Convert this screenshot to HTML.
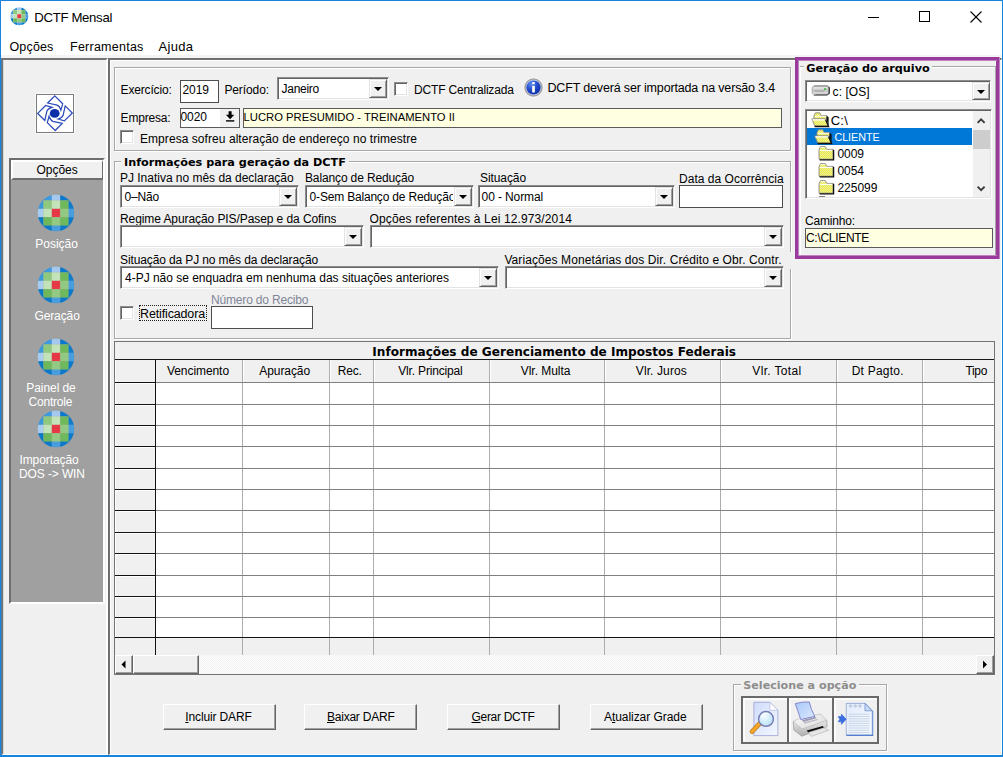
<!DOCTYPE html>
<html lang="pt-BR">
<head>
<meta charset="utf-8">
<title>DCTF Mensal</title>
<style>
*{box-sizing:border-box;margin:0;padding:0}
html,body{width:1003px;height:757px;overflow:hidden;background:#f0f0f0}
body{position:relative;font-family:"Liberation Sans",sans-serif;font-size:12px;color:#000}
.a{position:absolute}
.t{position:absolute;white-space:nowrap;line-height:1;font-family:"Liberation Sans",sans-serif}
.b{font-weight:bold;font-family:"DejaVu Sans","Liberation Sans",sans-serif}
/* window chrome */
#titlebar{left:0;top:0;width:1003px;height:58px;background:#fff;border-bottom:3px solid #f4f4f4}
#bt{left:0;top:0;width:1003px;height:1px;background:#1883dc}
#bl{left:0;top:0;width:1px;height:757px;background:#1883dc}
#bl2{left:1px;top:58px;width:1px;height:697px;background:#5f7c96}
#br{left:1002px;top:0;width:1px;height:757px;background:#1883dc}
#bb{left:0;top:755px;width:1003px;height:2px;background:#1883dc}
/* panels */
#lp{left:1px;top:58px;width:107px;height:697px;box-shadow:inset 1px 0 0 #d9d9d9;border-top:2px solid #757575;border-left:2px solid #757575;border-right:2px solid #fff;border-bottom:1px solid #fff;background:#f0f0f0}
#rp{left:108px;top:58px;width:894px;height:697px;box-shadow:inset 1px 1px 0 #fff;border-top:2px solid #6f6f6f;border-left:2px solid #6f6f6f;border-right:1px solid #fff;border-bottom:1px solid #fff;background:#f0f0f0}
/* etched group */
.grp{position:absolute;border:1px solid #a8a8a8;box-shadow:1px 1px 0 #fff, inset 1px 1px 0 #fff}
.lbg{position:absolute;background:#f0f0f0}
/* sunken combo */
.cb{position:absolute;background:#fff;border:1px solid;border-color:#8c8c8c #fff #fff #8c8c8c;box-shadow:inset 1px 1px 0 #646464, inset -1px -1px 0 #e3e3e3}
.dd{position:absolute;width:18px;height:19px;background:#f0f0f0;border:1px solid;border-color:#e3e3e3 #646464 #646464 #e3e3e3;box-shadow:inset 1px 1px 0 #fff, inset -1px -1px 0 #a0a0a0}
.dd:after{content:"";position:absolute;left:4px;top:7px;border:4px solid transparent;border-top:4px solid #000;border-bottom:0;width:0;height:0}
.dd.up:after{}
.inp{position:absolute;background:#fff;border:1px solid #4d4d4d}
.yel{position:absolute;background:#ffffe1;border:1px solid #5a5a5a}
.chk{position:absolute;width:14px;height:14px;background:#fff;border:1px solid;border-color:#8c8c8c #fff #fff #8c8c8c;box-shadow:inset 1px 1px 0 #646464, inset -1px -1px 0 #e3e3e3}
.btn{position:absolute;background:#f0f0f0;border:1px solid;border-color:#fff #646464 #646464 #fff;box-shadow:inset -1px -1px 0 #a0a0a0, inset 1px 1px 0 #f0f0f0}
u{text-decoration:underline}
</style>
</head>
<body>
<div class="a" id="titlebar"></div>
<div class="a" id="lp"></div><div class="a" id="rp"></div>
<div class="a" id="bt"></div><div class="a" id="bl"></div><div class="a" id="bl2"></div><div class="a" id="br"></div><div class="a" id="bb"></div>
<svg class="a" style="left:8.7px;top:6.3px" width="20.6" height="20.6" viewBox="-21 -21 42 42"><defs><clipPath id="c8_7_6_3"><circle cx="0" cy="0" r="18.3"/></clipPath></defs><g clip-path="url(#c8_7_6_3)"><rect x="-21.0" y="-21.0" width="8.5" height="8.5" fill="#2d8cd9"/><rect x="-12.6" y="-21.0" width="8.5" height="8.5" fill="#3f9ae0"/><rect x="-4.2" y="-21.0" width="8.5" height="8.5" fill="#a5c9ee"/><rect x="4.2" y="-21.0" width="8.5" height="8.5" fill="#0c7acb"/><rect x="12.6" y="-21.0" width="8.5" height="8.5" fill="#0b79c9"/><rect x="-21.0" y="-12.6" width="8.5" height="8.5" fill="#3b97dc"/><rect x="-12.6" y="-12.6" width="8.5" height="8.5" fill="#8fc87f"/><rect x="-4.2" y="-12.6" width="8.5" height="8.5" fill="#c5e3bb"/><rect x="4.2" y="-12.6" width="8.5" height="8.5" fill="#70b85c"/><rect x="12.6" y="-12.6" width="8.5" height="8.5" fill="#0f7ccc"/><rect x="-21.0" y="-4.2" width="8.5" height="8.5" fill="#a8cbf0"/><rect x="-12.6" y="-4.2" width="8.5" height="8.5" fill="#c2e2b8"/><rect x="-4.2" y="-4.2" width="8.5" height="8.5" fill="#e63946"/><rect x="4.2" y="-4.2" width="8.5" height="8.5" fill="#94c984"/><rect x="12.6" y="-4.2" width="8.5" height="8.5" fill="#4a9ddc"/><rect x="-21.0" y="4.2" width="8.5" height="8.5" fill="#0b79c9"/><rect x="-12.6" y="4.2" width="8.5" height="8.5" fill="#6fb75b"/><rect x="-4.2" y="4.2" width="8.5" height="8.5" fill="#94c984"/><rect x="4.2" y="4.2" width="8.5" height="8.5" fill="#70b85c"/><rect x="12.6" y="4.2" width="8.5" height="8.5" fill="#0b79c9"/><rect x="-21.0" y="12.6" width="8.5" height="8.5" fill="#0b79c9"/><rect x="-12.6" y="12.6" width="8.5" height="8.5" fill="#0b79c9"/><rect x="-4.2" y="12.6" width="8.5" height="8.5" fill="#4a9ddc"/><rect x="4.2" y="12.6" width="8.5" height="8.5" fill="#0b79c9"/><rect x="12.6" y="12.6" width="8.5" height="8.5" fill="#0b79c9"/></g></svg>
<svg class="a" style="left:860px;top:5px" width="130" height="24" viewBox="860 5 130 24" shape-rendering="crispEdges"><rect x="868" y="17" width="11" height="1" fill="#000"/><rect x="919.5" y="11.5" width="10" height="10" fill="none" stroke="#000" stroke-width="1"/><g shape-rendering="geometricPrecision" stroke="#000" stroke-width="1.1"><line x1="970.5" y1="11.5" x2="981.5" y2="22.5"/><line x1="981.5" y1="11.5" x2="970.5" y2="22.5"/></g></svg>
<div class="a" style="left:36px;top:94px;width:38px;height:39px;background:#fff;border:1px solid #7c7c7c;box-shadow:0 0 0 1px #fafafa"></div>
<svg class="a" style="left:30px;top:88px" width="50" height="50" viewBox="-25 -25.2 50 50"><g fill="none" stroke="#2b4bb8" stroke-width="1.25" stroke-linejoin="miter"><path transform="rotate(0)" d="M-0.2,-17.3 L7.7,-9.4 L5.9,-3.1 C5,-6 3.5,-7.6 2.1,-8.1 L-7.3,-10.2 Z"/><path transform="rotate(90)" d="M-0.2,-17.3 L7.7,-9.4 L5.9,-3.1 C5,-6 3.5,-7.6 2.1,-8.1 L-7.3,-10.2 Z"/><path transform="rotate(180)" d="M-0.2,-17.3 L7.7,-9.4 L5.9,-3.1 C5,-6 3.5,-7.6 2.1,-8.1 L-7.3,-10.2 Z"/><path transform="rotate(270)" d="M-0.2,-17.3 L7.7,-9.4 L5.9,-3.1 C5,-6 3.5,-7.6 2.1,-8.1 L-7.3,-10.2 Z"/></g><ellipse cx="-0.3" cy="0.2" rx="4.9" ry="4.3" fill="#0a2fa8"/></svg>
<div class="a" style="left:9px;top:158px;width:96px;height:446px;background:#a0a0a0;border:2px solid;border-color:#6e6e6e #fff #fff #6e6e6e"></div>
<div class="a" style="left:11px;top:160px;width:92px;height:20px;background:#f0f0f0;border-top:2px solid #fff;border-left:2px solid #fff;border-bottom:2px solid #6e6e6e;border-right:1px solid #6e6e6e"></div>
<svg class="a" style="left:35.1px;top:192.1px" width="42" height="42" viewBox="-21 -21 42 42"><defs><clipPath id="c35_1_192_1"><circle cx="0" cy="0" r="18.3"/></clipPath></defs><g clip-path="url(#c35_1_192_1)"><rect x="-21.0" y="-21.0" width="8.5" height="8.5" fill="#2d8cd9"/><rect x="-12.6" y="-21.0" width="8.5" height="8.5" fill="#3f9ae0"/><rect x="-4.2" y="-21.0" width="8.5" height="8.5" fill="#a5c9ee"/><rect x="4.2" y="-21.0" width="8.5" height="8.5" fill="#0c7acb"/><rect x="12.6" y="-21.0" width="8.5" height="8.5" fill="#0b79c9"/><rect x="-21.0" y="-12.6" width="8.5" height="8.5" fill="#3b97dc"/><rect x="-12.6" y="-12.6" width="8.5" height="8.5" fill="#8fc87f"/><rect x="-4.2" y="-12.6" width="8.5" height="8.5" fill="#c5e3bb"/><rect x="4.2" y="-12.6" width="8.5" height="8.5" fill="#70b85c"/><rect x="12.6" y="-12.6" width="8.5" height="8.5" fill="#0f7ccc"/><rect x="-21.0" y="-4.2" width="8.5" height="8.5" fill="#a8cbf0"/><rect x="-12.6" y="-4.2" width="8.5" height="8.5" fill="#c2e2b8"/><rect x="-4.2" y="-4.2" width="8.5" height="8.5" fill="#e63946"/><rect x="4.2" y="-4.2" width="8.5" height="8.5" fill="#94c984"/><rect x="12.6" y="-4.2" width="8.5" height="8.5" fill="#4a9ddc"/><rect x="-21.0" y="4.2" width="8.5" height="8.5" fill="#0b79c9"/><rect x="-12.6" y="4.2" width="8.5" height="8.5" fill="#6fb75b"/><rect x="-4.2" y="4.2" width="8.5" height="8.5" fill="#94c984"/><rect x="4.2" y="4.2" width="8.5" height="8.5" fill="#70b85c"/><rect x="12.6" y="4.2" width="8.5" height="8.5" fill="#0b79c9"/><rect x="-21.0" y="12.6" width="8.5" height="8.5" fill="#0b79c9"/><rect x="-12.6" y="12.6" width="8.5" height="8.5" fill="#0b79c9"/><rect x="-4.2" y="12.6" width="8.5" height="8.5" fill="#4a9ddc"/><rect x="4.2" y="12.6" width="8.5" height="8.5" fill="#0b79c9"/><rect x="12.6" y="12.6" width="8.5" height="8.5" fill="#0b79c9"/></g></svg>
<svg class="a" style="left:35.1px;top:264.1px" width="42" height="42" viewBox="-21 -21 42 42"><defs><clipPath id="c35_1_264_1"><circle cx="0" cy="0" r="18.3"/></clipPath></defs><g clip-path="url(#c35_1_264_1)"><rect x="-21.0" y="-21.0" width="8.5" height="8.5" fill="#2d8cd9"/><rect x="-12.6" y="-21.0" width="8.5" height="8.5" fill="#3f9ae0"/><rect x="-4.2" y="-21.0" width="8.5" height="8.5" fill="#a5c9ee"/><rect x="4.2" y="-21.0" width="8.5" height="8.5" fill="#0c7acb"/><rect x="12.6" y="-21.0" width="8.5" height="8.5" fill="#0b79c9"/><rect x="-21.0" y="-12.6" width="8.5" height="8.5" fill="#3b97dc"/><rect x="-12.6" y="-12.6" width="8.5" height="8.5" fill="#8fc87f"/><rect x="-4.2" y="-12.6" width="8.5" height="8.5" fill="#c5e3bb"/><rect x="4.2" y="-12.6" width="8.5" height="8.5" fill="#70b85c"/><rect x="12.6" y="-12.6" width="8.5" height="8.5" fill="#0f7ccc"/><rect x="-21.0" y="-4.2" width="8.5" height="8.5" fill="#a8cbf0"/><rect x="-12.6" y="-4.2" width="8.5" height="8.5" fill="#c2e2b8"/><rect x="-4.2" y="-4.2" width="8.5" height="8.5" fill="#e63946"/><rect x="4.2" y="-4.2" width="8.5" height="8.5" fill="#94c984"/><rect x="12.6" y="-4.2" width="8.5" height="8.5" fill="#4a9ddc"/><rect x="-21.0" y="4.2" width="8.5" height="8.5" fill="#0b79c9"/><rect x="-12.6" y="4.2" width="8.5" height="8.5" fill="#6fb75b"/><rect x="-4.2" y="4.2" width="8.5" height="8.5" fill="#94c984"/><rect x="4.2" y="4.2" width="8.5" height="8.5" fill="#70b85c"/><rect x="12.6" y="4.2" width="8.5" height="8.5" fill="#0b79c9"/><rect x="-21.0" y="12.6" width="8.5" height="8.5" fill="#0b79c9"/><rect x="-12.6" y="12.6" width="8.5" height="8.5" fill="#0b79c9"/><rect x="-4.2" y="12.6" width="8.5" height="8.5" fill="#4a9ddc"/><rect x="4.2" y="12.6" width="8.5" height="8.5" fill="#0b79c9"/><rect x="12.6" y="12.6" width="8.5" height="8.5" fill="#0b79c9"/></g></svg>
<svg class="a" style="left:35.1px;top:336.1px" width="42" height="42" viewBox="-21 -21 42 42"><defs><clipPath id="c35_1_336_1"><circle cx="0" cy="0" r="18.3"/></clipPath></defs><g clip-path="url(#c35_1_336_1)"><rect x="-21.0" y="-21.0" width="8.5" height="8.5" fill="#2d8cd9"/><rect x="-12.6" y="-21.0" width="8.5" height="8.5" fill="#3f9ae0"/><rect x="-4.2" y="-21.0" width="8.5" height="8.5" fill="#a5c9ee"/><rect x="4.2" y="-21.0" width="8.5" height="8.5" fill="#0c7acb"/><rect x="12.6" y="-21.0" width="8.5" height="8.5" fill="#0b79c9"/><rect x="-21.0" y="-12.6" width="8.5" height="8.5" fill="#3b97dc"/><rect x="-12.6" y="-12.6" width="8.5" height="8.5" fill="#8fc87f"/><rect x="-4.2" y="-12.6" width="8.5" height="8.5" fill="#c5e3bb"/><rect x="4.2" y="-12.6" width="8.5" height="8.5" fill="#70b85c"/><rect x="12.6" y="-12.6" width="8.5" height="8.5" fill="#0f7ccc"/><rect x="-21.0" y="-4.2" width="8.5" height="8.5" fill="#a8cbf0"/><rect x="-12.6" y="-4.2" width="8.5" height="8.5" fill="#c2e2b8"/><rect x="-4.2" y="-4.2" width="8.5" height="8.5" fill="#e63946"/><rect x="4.2" y="-4.2" width="8.5" height="8.5" fill="#94c984"/><rect x="12.6" y="-4.2" width="8.5" height="8.5" fill="#4a9ddc"/><rect x="-21.0" y="4.2" width="8.5" height="8.5" fill="#0b79c9"/><rect x="-12.6" y="4.2" width="8.5" height="8.5" fill="#6fb75b"/><rect x="-4.2" y="4.2" width="8.5" height="8.5" fill="#94c984"/><rect x="4.2" y="4.2" width="8.5" height="8.5" fill="#70b85c"/><rect x="12.6" y="4.2" width="8.5" height="8.5" fill="#0b79c9"/><rect x="-21.0" y="12.6" width="8.5" height="8.5" fill="#0b79c9"/><rect x="-12.6" y="12.6" width="8.5" height="8.5" fill="#0b79c9"/><rect x="-4.2" y="12.6" width="8.5" height="8.5" fill="#4a9ddc"/><rect x="4.2" y="12.6" width="8.5" height="8.5" fill="#0b79c9"/><rect x="12.6" y="12.6" width="8.5" height="8.5" fill="#0b79c9"/></g></svg>
<svg class="a" style="left:35.1px;top:408.1px" width="42" height="42" viewBox="-21 -21 42 42"><defs><clipPath id="c35_1_408_1"><circle cx="0" cy="0" r="18.3"/></clipPath></defs><g clip-path="url(#c35_1_408_1)"><rect x="-21.0" y="-21.0" width="8.5" height="8.5" fill="#2d8cd9"/><rect x="-12.6" y="-21.0" width="8.5" height="8.5" fill="#3f9ae0"/><rect x="-4.2" y="-21.0" width="8.5" height="8.5" fill="#a5c9ee"/><rect x="4.2" y="-21.0" width="8.5" height="8.5" fill="#0c7acb"/><rect x="12.6" y="-21.0" width="8.5" height="8.5" fill="#0b79c9"/><rect x="-21.0" y="-12.6" width="8.5" height="8.5" fill="#3b97dc"/><rect x="-12.6" y="-12.6" width="8.5" height="8.5" fill="#8fc87f"/><rect x="-4.2" y="-12.6" width="8.5" height="8.5" fill="#c5e3bb"/><rect x="4.2" y="-12.6" width="8.5" height="8.5" fill="#70b85c"/><rect x="12.6" y="-12.6" width="8.5" height="8.5" fill="#0f7ccc"/><rect x="-21.0" y="-4.2" width="8.5" height="8.5" fill="#a8cbf0"/><rect x="-12.6" y="-4.2" width="8.5" height="8.5" fill="#c2e2b8"/><rect x="-4.2" y="-4.2" width="8.5" height="8.5" fill="#e63946"/><rect x="4.2" y="-4.2" width="8.5" height="8.5" fill="#94c984"/><rect x="12.6" y="-4.2" width="8.5" height="8.5" fill="#4a9ddc"/><rect x="-21.0" y="4.2" width="8.5" height="8.5" fill="#0b79c9"/><rect x="-12.6" y="4.2" width="8.5" height="8.5" fill="#6fb75b"/><rect x="-4.2" y="4.2" width="8.5" height="8.5" fill="#94c984"/><rect x="4.2" y="4.2" width="8.5" height="8.5" fill="#70b85c"/><rect x="12.6" y="4.2" width="8.5" height="8.5" fill="#0b79c9"/><rect x="-21.0" y="12.6" width="8.5" height="8.5" fill="#0b79c9"/><rect x="-12.6" y="12.6" width="8.5" height="8.5" fill="#0b79c9"/><rect x="-4.2" y="12.6" width="8.5" height="8.5" fill="#4a9ddc"/><rect x="4.2" y="12.6" width="8.5" height="8.5" fill="#0b79c9"/><rect x="12.6" y="12.6" width="8.5" height="8.5" fill="#0b79c9"/></g></svg>
<div class="grp" style="left:114px;top:67px;width:677px;height:84px"></div>
<div class="inp" style="left:180px;top:80px;width:39px;height:23px"></div>
<div class="cb" style="left:277px;top:77px;width:112px;height:23px"></div><div class="dd" style="left:369px;top:79px"></div>
<div class="chk" style="left:394px;top:82px"></div>
<svg class="a" style="left:522px;top:75.9px" width="23" height="23" viewBox="-11.5 -11.5 23 23"><defs><radialGradient id="ig" cx="35%" cy="25%" r="80%"><stop offset="0" stop-color="#5b8af0"/><stop offset="0.55" stop-color="#2148c8"/><stop offset="1" stop-color="#0d2fa6"/></radialGradient></defs><circle r="10.3" fill="#f7f7f7"/><circle r="9.3" fill="#a3a3a3"/><circle r="7.7" fill="#c3d0f2"/><circle r="7.1" fill="url(#ig)"/><rect x="-1.25" y="-5.5" width="2.5" height="2.3" rx="0.6" fill="#fff"/><rect x="-1.35" y="-1.8" width="2.7" height="6.8" rx="0.4" fill="#fffdf0"/></svg>
<div class="a" style="left:180px;top:108px;width:60px;height:20px;background:#fff;border:1px solid #5a5a5a"></div>
<div class="a" style="left:220px;top:109px;width:19px;height:18px;background:#f0f0f0"></div>
<svg class="a" style="left:225px;top:110px" width="11" height="13" viewBox="225 110 11 13"><path d="M228.6,111.2 h3 v3.6 h2.7 l-4.2,4.5 l-4.2,-4.5 h2.7 z" fill="#000"/><rect x="226" y="120.2" width="8.3" height="1.4" fill="#000"/></svg>
<div class="yel" style="left:243px;top:108px;width:539px;height:20px"></div>
<div class="chk" style="left:120px;top:130px"></div>
<div class="grp" style="left:114px;top:161px;width:677px;height:178px"></div>
<div class="lbg" style="left:121px;top:155px;width:228px;height:14px"></div>
<div class="cb" style="left:120px;top:185px;width:179px;height:23px"></div><div class="dd" style="left:279px;top:187px"></div>
<div class="cb" style="left:305px;top:185px;width:169px;height:23px"></div><div class="dd" style="left:454px;top:187px"></div>
<div class="cb" style="left:478px;top:185px;width:197px;height:23px"></div><div class="dd" style="left:655px;top:187px"></div>
<div class="inp" style="left:679px;top:185px;width:104px;height:23px"></div>
<div class="cb" style="left:120px;top:225px;width:244px;height:23px"></div><div class="dd" style="left:344px;top:227px"></div>
<div class="cb" style="left:370px;top:225px;width:414px;height:23px"></div><div class="dd" style="left:764px;top:227px"></div>
<div class="cb" style="left:120px;top:266px;width:379px;height:23px"></div><div class="dd" style="left:479px;top:268px"></div>
<div class="cb" style="left:505px;top:266px;width:279px;height:23px"></div><div class="dd" style="left:764px;top:268px"></div>
<div class="lbg" style="left:786px;top:252px;width:7px;height:17px"></div>
<div class="chk" style="left:120px;top:306px"></div>
<div class="a" style="left:139px;top:305px;width:68px;height:16px;border:1px dotted #222"></div>
<div class="inp" style="left:211px;top:306px;width:102px;height:23px"></div>
<div class="a" style="left:309px;top:189px;width:144px;height:15px;overflow:hidden"><span class="t" style="left:0.6px;top:1.8px;font-size:12px;letter-spacing:-0.19px">0-Sem Balanço de Redução</span></div>
<div class="a" style="left:800px;top:66px;width:196px;height:190px;border-top:1px solid #a8a8a8;border-right:1px solid #a8a8a8;box-shadow:inset 0 1px 0 #fff, inset 1px 0 0 #fff"></div>
<div class="lbg" style="left:804px;top:60px;width:128px;height:14px"></div>
<div class="a" style="left:795px;top:57px;width:205px;height:202px;border:4px solid #9a3a9c"></div><div class="a" style="left:798px;top:60px;width:199px;height:196px;border:1px solid #bc83be;border-right:0"></div><div class="a" style="left:999px;top:57px;width:1px;height:202px;background:#bc83be"></div>
<div class="cb" style="left:805px;top:80px;width:186px;height:22px"></div><div class="dd" style="left:972px;top:82px;height:18px"></div>
<svg class="a" style="left:811px;top:84px" width="20" height="13" viewBox="0 0 20 13"><defs><linearGradient id="dg" x1="0" y1="0" x2="0" y2="1"><stop offset="0" stop-color="#f4f4f4"/><stop offset="0.5" stop-color="#c4c4c4"/><stop offset="1" stop-color="#e8e8e8"/></linearGradient></defs><path d="M2.2,11.6 h14 l2.6,-2.2 v-6 l-1,-1 z" fill="#1a1a1a"/><path d="M3.4,1.2 h13 l2,1.6 h-16.8 z" fill="#8d8d8d"/><rect x="1.2" y="2.6" width="16.2" height="7.6" rx="1.4" fill="url(#dg)" stroke="#9a9a9a" stroke-width="0.8"/><rect x="3.5" y="6.6" width="10" height="1" fill="#9c9c9c"/><rect x="13" y="4.3" width="2.2" height="1.5" fill="#33b233"/></svg>
<div class="cb" style="left:805px;top:109px;width:187px;height:90px"></div>
<div class="a" style="left:807px;top:128px;width:165px;height:17px;background:#0078d7"></div>
<div class="a" style="left:973px;top:111px;width:17px;height:86px;background:#f0f0f0"></div>
<div class="a" style="left:973px;top:130px;width:17px;height:19px;background:#cdcdcd"></div>
<svg class="a" style="left:973px;top:111px" width="17" height="86" viewBox="0 0 17 86"><g fill="none" stroke="#3c3c3c" stroke-width="1.9"><path d="M4.6,11.9 L8.1,8.4 L11.6,11.9"/><path d="M4.6,75.6 L8.1,79.1 L11.6,75.6"/></g></svg>
<svg class="a" style="left:0;top:0" width="0" height="0"><defs><pattern id="dth" width="2" height="2" patternUnits="userSpaceOnUse"><rect width="2" height="2" fill="#f3f33a"/><rect width="1" height="1" fill="#e6e6a4"/><rect x="1" y="1" width="1" height="1" fill="#e6e6a4"/></pattern></defs></svg>
<svg class="a" style="left:810.5px;top:111.8px" width="19" height="16" viewBox="0 0 19 16"><path d="M3,3.6 l1.4,-2.8 h4.4 l1.4,2.8 h5.4 v3.6 h-12.6 z" fill="url(#dth)" stroke="#8a8a8a" stroke-width="0.9"/><path d="M4,4.3 h11" stroke="#fff" stroke-width="0.9"/><path d="M15.8,3.8 l1.8,1.4 v9 l-2.2,-7 z" fill="#111"/><path d="M0.8,6.9 h13.2 l3.2,7.2 h-13.4 z" fill="url(#dth)" stroke="#8a8a8a" stroke-width="0.9"/><path d="M1.4,7.9 h12.4" stroke="#fff" stroke-width="1.3"/><path d="M3.6,14.5 h14 l-2.8,-6.4" fill="none" stroke="#111" stroke-width="1.3"/></svg>
<svg class="a" style="left:814px;top:128.8px" width="19" height="16" viewBox="0 0 19 16"><path d="M3,3.6 l1.4,-2.8 h4.4 l1.4,2.8 h5.4 v3.6 h-12.6 z" fill="url(#dth)" stroke="#8a8a8a" stroke-width="0.9"/><path d="M4,4.3 h11" stroke="#fff" stroke-width="0.9"/><path d="M15.8,3.8 l1.8,1.4 v9 l-2.2,-7 z" fill="#111"/><path d="M0.8,6.9 h13.2 l3.2,7.2 h-13.4 z" fill="url(#dth)" stroke="#8a8a8a" stroke-width="0.9"/><path d="M1.4,7.9 h12.4" stroke="#fff" stroke-width="1.3"/><path d="M3.6,14.5 h14 l-2.8,-6.4" fill="none" stroke="#111" stroke-width="1.3"/></svg>
<svg class="a" style="left:817.9px;top:145.8px" width="17" height="15" viewBox="0 0 17 15"><path d="M1,3.4 l1.6,-2.9 h4.6 l1.6,2.9 h6.2 v9.8 h-14 z" fill="url(#dth)" stroke="#8a8a8a" stroke-width="0.9"/><path d="M1.8,4.4 h12.4" stroke="#fff" stroke-width="1.1"/><path d="M2.6,1.4 h4.4" stroke="#fff" stroke-width="0.8"/><path d="M15.6,3.8 v10 h-14" fill="none" stroke="#111" stroke-width="1.3"/></svg>
<svg class="a" style="left:817.9px;top:162.8px" width="17" height="15" viewBox="0 0 17 15"><path d="M1,3.4 l1.6,-2.9 h4.6 l1.6,2.9 h6.2 v9.8 h-14 z" fill="url(#dth)" stroke="#8a8a8a" stroke-width="0.9"/><path d="M1.8,4.4 h12.4" stroke="#fff" stroke-width="1.1"/><path d="M2.6,1.4 h4.4" stroke="#fff" stroke-width="0.8"/><path d="M15.6,3.8 v10 h-14" fill="none" stroke="#111" stroke-width="1.3"/></svg>
<svg class="a" style="left:817.9px;top:179.8px" width="17" height="15" viewBox="0 0 17 15"><path d="M1,3.4 l1.6,-2.9 h4.6 l1.6,2.9 h6.2 v9.8 h-14 z" fill="url(#dth)" stroke="#8a8a8a" stroke-width="0.9"/><path d="M1.8,4.4 h12.4" stroke="#fff" stroke-width="1.1"/><path d="M2.6,1.4 h4.4" stroke="#fff" stroke-width="0.8"/><path d="M15.6,3.8 v10 h-14" fill="none" stroke="#111" stroke-width="1.3"/></svg>
<div class="a" style="left:819px;top:196px;width:6px;height:1px;background:#8a8a8a"></div>
<div class="yel" style="left:805px;top:228px;width:188px;height:20px"></div>
<div class="a" style="left:114px;top:341px;width:881px;height:334px;background:#f0f0f0;border:1px solid #747474"></div>
<div class="a" style="left:156px;top:383px;width:838px;height:254px;background:#fff"></div>
<div class="a" style="left:115px;top:359px;width:879px;height:1px;background:#1a1a1a"></div>
<div class="a" style="left:242px;top:360px;width:1px;height:295px;background:#adadad"></div>
<div class="a" style="left:243px;top:360px;width:1px;height:22px;background:#fff"></div>
<div class="a" style="left:329px;top:360px;width:1px;height:295px;background:#adadad"></div>
<div class="a" style="left:330px;top:360px;width:1px;height:22px;background:#fff"></div>
<div class="a" style="left:373px;top:360px;width:1px;height:295px;background:#adadad"></div>
<div class="a" style="left:374px;top:360px;width:1px;height:22px;background:#fff"></div>
<div class="a" style="left:489px;top:360px;width:1px;height:295px;background:#adadad"></div>
<div class="a" style="left:490px;top:360px;width:1px;height:22px;background:#fff"></div>
<div class="a" style="left:604px;top:360px;width:1px;height:295px;background:#adadad"></div>
<div class="a" style="left:605px;top:360px;width:1px;height:22px;background:#fff"></div>
<div class="a" style="left:720px;top:360px;width:1px;height:295px;background:#adadad"></div>
<div class="a" style="left:721px;top:360px;width:1px;height:22px;background:#fff"></div>
<div class="a" style="left:836px;top:360px;width:1px;height:295px;background:#adadad"></div>
<div class="a" style="left:837px;top:360px;width:1px;height:22px;background:#fff"></div>
<div class="a" style="left:922px;top:360px;width:1px;height:295px;background:#adadad"></div>
<div class="a" style="left:923px;top:360px;width:1px;height:22px;background:#fff"></div>
<div class="a" style="left:115px;top:360px;width:1px;height:278px;background:#fff"></div>
<div class="a" style="left:156px;top:382px;width:838px;height:1px;background:#808080"></div>
<div class="a" style="left:115px;top:382px;width:41px;height:1px;background:#111"></div>
<div class="a" style="left:115px;top:383px;width:40px;height:1px;background:#fff"></div>
<div class="a" style="left:156px;top:404px;width:838px;height:1px;background:#808080"></div>
<div class="a" style="left:115px;top:404px;width:41px;height:1px;background:#111"></div>
<div class="a" style="left:115px;top:405px;width:40px;height:1px;background:#fff"></div>
<div class="a" style="left:156px;top:425px;width:838px;height:1px;background:#808080"></div>
<div class="a" style="left:115px;top:425px;width:41px;height:1px;background:#111"></div>
<div class="a" style="left:115px;top:426px;width:40px;height:1px;background:#fff"></div>
<div class="a" style="left:156px;top:446px;width:838px;height:1px;background:#808080"></div>
<div class="a" style="left:115px;top:446px;width:41px;height:1px;background:#111"></div>
<div class="a" style="left:115px;top:447px;width:40px;height:1px;background:#fff"></div>
<div class="a" style="left:156px;top:468px;width:838px;height:1px;background:#808080"></div>
<div class="a" style="left:115px;top:468px;width:41px;height:1px;background:#111"></div>
<div class="a" style="left:115px;top:469px;width:40px;height:1px;background:#fff"></div>
<div class="a" style="left:156px;top:489px;width:838px;height:1px;background:#808080"></div>
<div class="a" style="left:115px;top:489px;width:41px;height:1px;background:#111"></div>
<div class="a" style="left:115px;top:490px;width:40px;height:1px;background:#fff"></div>
<div class="a" style="left:156px;top:510px;width:838px;height:1px;background:#808080"></div>
<div class="a" style="left:115px;top:510px;width:41px;height:1px;background:#111"></div>
<div class="a" style="left:115px;top:511px;width:40px;height:1px;background:#fff"></div>
<div class="a" style="left:156px;top:532px;width:838px;height:1px;background:#808080"></div>
<div class="a" style="left:115px;top:532px;width:41px;height:1px;background:#111"></div>
<div class="a" style="left:115px;top:533px;width:40px;height:1px;background:#fff"></div>
<div class="a" style="left:156px;top:553px;width:838px;height:1px;background:#808080"></div>
<div class="a" style="left:115px;top:553px;width:41px;height:1px;background:#111"></div>
<div class="a" style="left:115px;top:554px;width:40px;height:1px;background:#fff"></div>
<div class="a" style="left:156px;top:575px;width:838px;height:1px;background:#808080"></div>
<div class="a" style="left:115px;top:575px;width:41px;height:1px;background:#111"></div>
<div class="a" style="left:115px;top:576px;width:40px;height:1px;background:#fff"></div>
<div class="a" style="left:156px;top:596px;width:838px;height:1px;background:#808080"></div>
<div class="a" style="left:115px;top:596px;width:41px;height:1px;background:#111"></div>
<div class="a" style="left:115px;top:597px;width:40px;height:1px;background:#fff"></div>
<div class="a" style="left:156px;top:617px;width:838px;height:1px;background:#808080"></div>
<div class="a" style="left:115px;top:617px;width:41px;height:1px;background:#111"></div>
<div class="a" style="left:115px;top:618px;width:40px;height:1px;background:#fff"></div>
<div class="a" style="left:115px;top:637px;width:879px;height:1px;background:#111"></div>
<div class="a" style="left:155px;top:360px;width:1px;height:295px;background:#111"></div>
<div class="a" style="left:115px;top:655px;width:879px;height:19px;background:#fafafa;background-image:repeating-conic-gradient(#fff 0% 25%, #f0f0f0 0% 50%);background-size:2px 2px"></div>
<div class="btn" style="left:115px;top:655px;width:18px;height:19px"></div>
<div class="btn" style="left:133px;top:655px;width:66px;height:19px"></div>
<div class="btn" style="left:976px;top:655px;width:18px;height:19px"></div>
<svg class="a" style="left:115px;top:655.5px" width="18" height="18" viewBox="0 0 18 18"><path d="M10.5,4.5 v8 l-4,-4 z" fill="#000"/></svg>
<svg class="a" style="left:976px;top:655.5px" width="18" height="18" viewBox="0 0 18 18"><path d="M7,4.5 v8 l4,-4 z" fill="#000"/></svg>
<div class="btn" style="left:163px;top:704px;width:113px;height:26px"></div>
<div class="btn" style="left:304px;top:704px;width:113px;height:26px"></div>
<div class="btn" style="left:447px;top:704px;width:113px;height:26px"></div>
<div class="btn" style="left:590px;top:704px;width:113px;height:26px"></div>
<div class="grp" style="left:733px;top:684px;width:154px;height:67px"></div>
<div class="lbg" style="left:741px;top:678px;width:118px;height:14px"></div>
<div class="a" style="left:741px;top:696px;width:138px;height:48px;background:#f0f0f0;border:2px solid #6a6a6a"></div>
<div class="a" style="left:787px;top:698px;width:2px;height:44px;background:#6a6a6a"></div>
<div class="a" style="left:832px;top:698px;width:2px;height:44px;background:#6a6a6a"></div>
<div class="a" style="left:743px;top:698px;width:44px;height:44px;border-top:2px solid #fcfcfc;border-left:2px solid #fcfcfc"></div>
<div class="a" style="left:789px;top:698px;width:43px;height:44px;border-top:2px solid #fcfcfc;border-left:2px solid #fcfcfc"></div>
<div class="a" style="left:834px;top:698px;width:43px;height:44px;border-top:2px solid #fcfcfc;border-left:2px solid #fcfcfc"></div>
<svg class="a" style="left:748px;top:700px" width="34" height="38" viewBox="748 700 34 38"><defs><linearGradient id="pg1" x1="0" y1="0" x2="1" y2="1"><stop offset="0" stop-color="#cfdcfb"/><stop offset="1" stop-color="#f4f7fe"/></linearGradient><radialGradient id="lg1" cx="40%" cy="35%" r="70%"><stop offset="0" stop-color="#f2fbff"/><stop offset="1" stop-color="#b5e2f6"/></radialGradient></defs>
<path d="M753.9,702.3 h16 l8,8 v25.3 h-24 z" fill="url(#pg1)" stroke="#a3a8dc" stroke-width="0.9"/>
<path d="M769.9,702.3 v8 h8 z" fill="#fff" stroke="#b4b8e0" stroke-width="0.7"/>
<path d="M759.6,723.6 L752,731.6" stroke="#b9771a" stroke-width="4.6" stroke-linecap="round"/>
<path d="M759.6,723.6 L752,731.6" stroke="#f4a62a" stroke-width="3.2" stroke-linecap="round"/>
<circle cx="766" cy="718.9" r="7.4" fill="url(#lg1)" stroke="#7a7eb6" stroke-width="1.5"/>
<path d="M762,716.5 a5,5 0 0 1 6,-2.8" fill="none" stroke="#fff" stroke-width="1.4" stroke-linecap="round"/>
</svg>
<svg class="a" style="left:790px;top:700px" width="42" height="40" viewBox="790 700 42 40"><defs><linearGradient id="pp" x1="0" y1="0" x2="1" y2="1"><stop offset="0" stop-color="#a9c8f8"/><stop offset="1" stop-color="#dce9ff"/></linearGradient><linearGradient id="pb" x1="0" y1="0" x2="0" y2="1"><stop offset="0" stop-color="#e9e9e9"/><stop offset="1" stop-color="#adadad"/></linearGradient><linearGradient id="pt" x1="0" y1="0" x2="1" y2="1"><stop offset="0" stop-color="#fbfbfb"/><stop offset="1" stop-color="#d9d9d9"/></linearGradient></defs>
<path d="M793.3,721.6 l0.5,8.4 l8,6.2 l25.4,-9.6 l-0.5,-6.2 z" fill="url(#pb)" stroke="#9c9c9c" stroke-width="0.7"/>
<path d="M793.3,721.4 l8.6,-4.2 l19,-3 l5.8,6.2 l-24.6,8.6 z" fill="url(#pt)" stroke="#b0b0b0" stroke-width="0.6"/>
<path d="M795.3,703.6 q7,-2 14,-1.6 q1.5,7.5 5.5,14.4 l-14,3.2 z" fill="url(#pp)" stroke="#7a7ac6" stroke-width="0.9"/>
<path d="M802,720.2 l13.2,-3.4 l1.2,1.5 l-13.2,3.6 z" fill="#9c9cb4"/>
<path d="M803.6,722.6 l13.4,-3.7 l0.8,1.1 l-13.4,3.8 z" fill="#b9b9c6"/>
<path d="M806.8,730.4 l16,-4.4 l1.2,1.8 l-15.8,4.8 z" fill="#0c0c0c"/>
<path d="M808.4,732.4 l15.6,-4.6 l4.8,2.4 l-17.6,6.2 z" fill="#e6e6e6" stroke="#a5a5a5" stroke-width="0.5"/>
</svg>
<svg class="a" style="left:836px;top:700px" width="42" height="40" viewBox="836 700 42 40"><defs><linearGradient id="np" x1="0" y1="0" x2="1" y2="1"><stop offset="0" stop-color="#e3ecfb"/><stop offset="1" stop-color="#f6f9ff"/></linearGradient></defs>
<path d="M846.4,703.6 h19 l7.8,7.8 v24.6 h-26.8 z" fill="#4274cf"/>
<path d="M846.2,703.4 h18.8 l7.2,7.4 v24 h-26 z" fill="url(#np)" stroke="#8fa6d6" stroke-width="0.7"/>
<path d="M865,703.4 v7.4 h7.2 z" fill="#c9dcf8" stroke="#5f82c4" stroke-width="0.7"/>
<path d="M848.6,714.2 h21" stroke="#c3d2e4" stroke-width="0.9"/><path d="M848.6,716.5 h21" stroke="#c3d2e4" stroke-width="0.9"/><path d="M848.6,718.8 h21" stroke="#c3d2e4" stroke-width="0.9"/><path d="M848.6,721.1 h21" stroke="#c3d2e4" stroke-width="0.9"/><path d="M848.6,723.4 h21" stroke="#c3d2e4" stroke-width="0.9"/><path d="M848.6,725.7 h21" stroke="#c3d2e4" stroke-width="0.9"/><path d="M848.6,728.0 h21" stroke="#c3d2e4" stroke-width="0.9"/><path d="M848.6,730.3 h21" stroke="#c3d2e4" stroke-width="0.9"/><path d="M848.6,732.6 h21" stroke="#c3d2e4" stroke-width="0.9"/><circle cx="850.6" cy="706" r="1.3" fill="#c5cfe6" stroke="#a9b6d6" stroke-width="0.5"/><circle cx="855.3" cy="706" r="1.3" fill="#c5cfe6" stroke="#a9b6d6" stroke-width="0.5"/><circle cx="860" cy="706" r="1.3" fill="#c5cfe6" stroke="#a9b6d6" stroke-width="0.5"/><path d="M838.2,716.6 h3.2 v-2.6 l4.8,5.2 l-4.8,5.2 v-2.6 h-3.2 l1.6,-2.6 z" fill="#3a6fe2" stroke="#2c5bd0" stroke-width="0.5"/></svg>
<span class="t" style="left:34.3px;top:11.1px;font-size:13.20px;letter-spacing:-0.331px;">DCTF Mensal</span>
<span class="t" style="left:9.5px;top:41.0px;font-size:12.50px;letter-spacing:0.151px;">Opções</span>
<span class="t" style="left:70.0px;top:41.0px;font-size:12.50px;letter-spacing:0.249px;">Ferramentas</span>
<span class="t" style="left:158.5px;top:40.0px;font-size:13.00px;letter-spacing:0.290px;">Ajuda</span>
<span class="t" style="left:120.6px;top:84.1px;font-size:12.00px;letter-spacing:-0.169px;">Exercício:</span>
<span class="t" style="left:182.4px;top:84.1px;font-size:12.00px;letter-spacing:-0.026px;">2019</span>
<span class="t" style="left:224.4px;top:84.1px;font-size:12.00px;letter-spacing:-0.097px;">Período:</span>
<span class="t" style="left:281.5px;top:83.1px;font-size:12.00px;letter-spacing:-0.266px;">Janeiro</span>
<span class="t" style="left:414.0px;top:84.1px;font-size:12.00px;letter-spacing:-0.177px;">DCTF Centralizada</span>
<span class="t" style="left:547.5px;top:82.0px;font-size:12.50px;letter-spacing:-0.164px;">DCFT deverá ser importada na versão 3.4</span>
<span class="t" style="left:120.6px;top:112.1px;font-size:12.00px;letter-spacing:-0.195px;">Empresa:</span>
<span class="t" style="left:180.4px;top:111.1px;font-size:12.00px;letter-spacing:-0.026px;">0020</span>
<span class="t" style="left:243.6px;top:112.0px;font-size:11.24px;letter-spacing:0.006px;">LUCRO PRESUMIDO - TREINAMENTO II</span>
<span class="t" style="left:140.0px;top:133.1px;font-size:12.00px;letter-spacing:0.058px;">Empresa sofreu alteração de endereço no trimestre</span>
<span class="t b" style="left:124.0px;top:157.0px;font-size:11.24px;">Informações para geração da DCTF</span>
<span class="t" style="left:120.0px;top:172.1px;font-size:12.00px;letter-spacing:-0.016px;">PJ Inativa no mês da declaração</span>
<span class="t" style="left:305.0px;top:172.1px;font-size:12.00px;letter-spacing:-0.135px;">Balanço de Redução</span>
<span class="t" style="left:480.0px;top:172.1px;font-size:12.00px;letter-spacing:-0.088px;">Situação</span>
<span class="t" style="left:679.0px;top:173.1px;font-size:12.00px;letter-spacing:0.030px;">Data da Ocorrência</span>
<span class="t" style="left:124.4px;top:191.1px;font-size:12.00px;letter-spacing:-0.155px;">0–Não</span>
<span class="t" style="left:481.6px;top:191.1px;font-size:12.00px;letter-spacing:-0.117px;">00 - Normal</span>
<span class="t" style="left:120.0px;top:213.1px;font-size:12.00px;height:11.9px;overflow:hidden;letter-spacing:-0.083px;">Regime Apuração PIS/Pasep e da Cofins</span>
<span class="t" style="left:369.6px;top:213.1px;font-size:12.00px;height:11.9px;overflow:hidden;letter-spacing:0.122px;">Opções referentes à Lei 12.973/2014</span>
<span class="t" style="left:120.0px;top:254.1px;font-size:12.00px;letter-spacing:-0.118px;">Situação da PJ no mês da declaração</span>
<span class="t" style="left:504.4px;top:254.1px;font-size:12.00px;letter-spacing:0.091px;">Variações Monetárias dos Dir. Crédito e Obr. Contr.</span>
<span class="t" style="left:125.0px;top:272.1px;font-size:12.00px;letter-spacing:-0.016px;">4-PJ não se enquadra em nenhuma das situações anteriores</span>
<span class="t" style="left:140.0px;top:308.0px;font-size:12.50px;letter-spacing:-0.142px;">Retificadora</span>
<span class="t" style="left:211.0px;top:294.1px;font-size:12.00px;color:#7f8698;letter-spacing:-0.173px;">Número do Recibo</span>
<span class="t b" style="left:372.3px;top:346.0px;font-size:12.09px;letter-spacing:0.008px;">Informações de Gerenciamento de Impostos Federais</span>
<span class="t" style="left:167.0px;top:365.1px;font-size:12.00px;letter-spacing:-0.072px;">Vencimento</span>
<span class="t" style="left:259.3px;top:365.1px;font-size:12.00px;letter-spacing:-0.084px;">Apuração</span>
<span class="t" style="left:337.8px;top:365.1px;font-size:12.00px;letter-spacing:-0.247px;">Rec.</span>
<span class="t" style="left:398.3px;top:365.1px;font-size:12.00px;letter-spacing:-0.179px;">Vlr. Principal</span>
<span class="t" style="left:520.8px;top:365.1px;font-size:12.00px;letter-spacing:-0.052px;">Vlr. Multa</span>
<span class="t" style="left:635.8px;top:365.1px;font-size:12.00px;letter-spacing:0.108px;">Vlr. Juros</span>
<span class="t" style="left:752.3px;top:365.1px;font-size:12.00px;letter-spacing:0.349px;">Vlr. Total</span>
<span class="t" style="left:851.7px;top:365.1px;font-size:12.00px;letter-spacing:0.219px;">Dt Pagto.</span>
<span class="t" style="left:965.5px;top:365.1px;font-size:12.00px;letter-spacing:-0.352px;">Tipo</span>
<span class="t" style="left:185.3px;top:711.1px;font-size:12.00px;letter-spacing:-0.136px;"><u>I</u>ncluir DARF</span>
<span class="t" style="left:327.0px;top:711.1px;font-size:12.00px;letter-spacing:-0.230px;"><u>B</u>aixar DARF</span>
<span class="t" style="left:471.5px;top:711.1px;font-size:12.00px;letter-spacing:-0.302px;"><u>G</u>erar DCTF</span>
<span class="t" style="left:604.0px;top:711.1px;font-size:12.00px;letter-spacing:-0.060px;">A<u>t</u>ualizar Grade</span>
<span class="t b" style="left:743.3px;top:680.0px;font-size:11.13px;color:#8d8d8d;">Selecione a opção</span>
<span class="t" style="left:36.5px;top:164.1px;font-size:12.00px;letter-spacing:-0.027px;">Opções</span>
<span class="t" style="left:35.2px;top:238.1px;font-size:12.00px;color:#fff;letter-spacing:0.014px;">Posição</span>
<span class="t" style="left:34.4px;top:310.1px;font-size:12.00px;color:#fff;letter-spacing:-0.090px;">Geração</span>
<span class="t" style="left:26.3px;top:382.1px;font-size:12.00px;color:#fff;letter-spacing:-0.072px;">Painel de</span>
<span class="t" style="left:28.6px;top:396.1px;font-size:12.00px;color:#fff;letter-spacing:-0.220px;">Controle</span>
<span class="t" style="left:19.4px;top:454.1px;font-size:12.00px;color:#fff;letter-spacing:-0.083px;">Importação</span>
<span class="t" style="left:19.0px;top:468.1px;font-size:12.00px;color:#fff;letter-spacing:-0.112px;">DOS -&gt; WIN</span>
<span class="t b" style="left:806.3px;top:63.0px;font-size:11.22px;">Geração do arquivo</span>
<span class="t" style="left:832.6px;top:86.1px;font-size:12.00px;letter-spacing:0.059px;">c: [OS]</span>
<span class="t" style="left:830.8px;top:115.1px;font-size:12.96px;letter-spacing:0.213px;">C:\</span>
<span class="t" style="left:834.4px;top:132.0px;font-size:10.80px;color:#fff;letter-spacing:-0.058px;">CLIENTE</span>
<span class="t" style="left:837.4px;top:148.1px;font-size:12.00px;letter-spacing:-0.026px;">0009</span>
<span class="t" style="left:837.4px;top:165.1px;font-size:12.00px;letter-spacing:-0.026px;">0054</span>
<span class="t" style="left:837.4px;top:182.1px;font-size:12.00px;letter-spacing:0.009px;">225099</span>
<span class="t" style="left:805.0px;top:215.1px;font-size:12.00px;letter-spacing:-0.170px;">Caminho:</span>
<span class="t" style="left:806.0px;top:232.1px;font-size:12.00px;letter-spacing:-0.302px;">C:\CLIENTE</span>
</body>
</html>
